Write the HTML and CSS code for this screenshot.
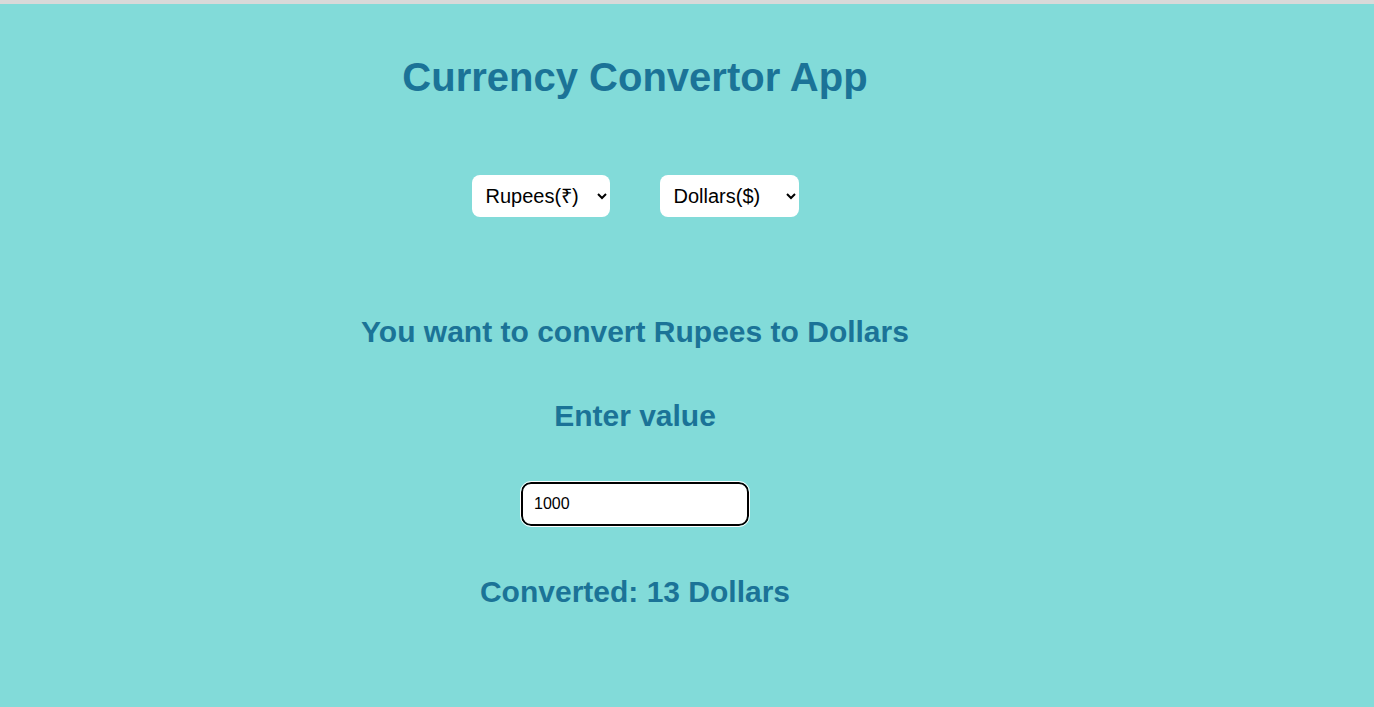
FILE: index.html
```html
<!DOCTYPE html>
<html lang="en">
<head>
	<meta charset="utf-8" />
	<title>Currency Convertor App</title>
	<link rel="stylesheet" href="styles.css">
</head>
<body>
	<div id="container">
		<h1>Currency Convertor App</h1>
		<div id="choices">
			<select id="from">
				<option>Rupees(₹)</option>
				<option>Dollars($)</option>
			</select>
			<select id="to">
				<option>Dollars($)</option>
				<option>Rupees(₹)</option>
			</select>
		</div>
		<h2>You want to convert Rupees to Dollars</h2>
		<h2>Enter value</h2>
		<input type="text" id="amount" value="1000">
		<h2 id="result">Converted: 13 Dollars</h2>
	</div>
</body>
</html>
```

FILE: styles.css
```css
html {
	background-color: rgb(130,219,217);
}

body {
	margin: 0;
	border-top: 4px solid rgb(217,217,217);
	background-color: rgb(130,219,217);
	font-family: "Liberation Sans", Arial, sans-serif;
	min-height: 703px;
}

#container {
	width: 1270px;
	display: flex;
	flex-direction: column;
	align-items: center;
	color: rgb(27,115,151);
}

h1 {
	font-size: 40px;
	margin: 50px 0 0 0;
	line-height: 46px;
}

h2 {
	font-size: 30px;
	margin: 0;
	line-height: 34px;
}

#choices {
	display: flex;
	gap: 50px;
	margin: 75px 0 98px 0;
}

select {
	font-family: "Liberation Sans", Arial, sans-serif;
	font-size: 20px;
	height: 42px;
	padding: 0 8px 0 10px;
	border: none;
	border-radius: 8px;
	background-color: white;
	color: black;
}

#from {
	width: 138px;
}

#to {
	width: 139px;
}

h2 + h2 {
	margin-top: 50px;
}

#amount {
	box-sizing: border-box;
	width: 228px;
	height: 44px;
	margin-top: 49px;
	padding: 0 11px;
	font-family: "Liberation Sans", Arial, sans-serif;
	font-size: 16px;
	border: 2px solid black;
	border-radius: 10px;
	outline: 1px solid white;
}

#result {
	margin-top: 49px;
}
```
